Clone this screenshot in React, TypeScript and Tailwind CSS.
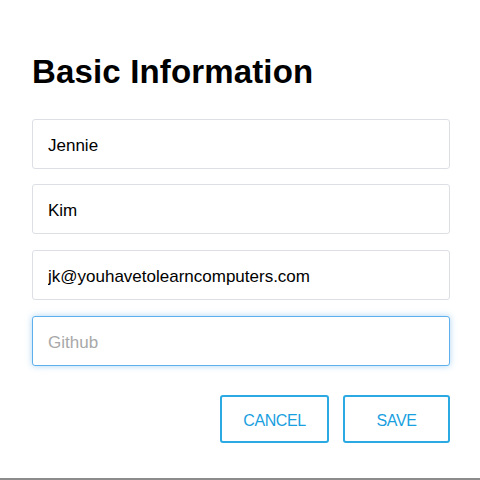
import { useState } from "react";

const font = { fontFamily: '"Liberation Sans", Arial, sans-serif' };

const App = () => {
  const [form, setForm] = useState({
    first: "Jennie",
    last: "Kim",
    email: "jk@youhavetolearncomputers.com",
    github: "",
  });

  const inputCls =
    "block w-full h-[50px] rounded-[3px] border border-[#dcdfe5] bg-white px-[15px] pt-[3px] text-[17px] text-black outline-none";

  return (
    <div
      className="w-[480px] h-[480px] bg-white border-b-2 border-[#8c8c8c] pl-[32px] pr-[30px] pt-[55px]"
      style={font}
    >
      {/* Header */}
      <h1 className="text-[33px] leading-[33px] font-bold text-black tracking-[0.15px]">
        Basic Information
      </h1>

      <div className="mt-[31px]">
        <input
          className={inputCls}
          value={form.first}
          onChange={(e) => setForm({ ...form, first: e.target.value })}
        />
        <input
          className={`${inputCls} mt-[15px]`}
          value={form.last}
          onChange={(e) => setForm({ ...form, last: e.target.value })}
        />
        <input
          className={`${inputCls} mt-[16px]`}
          value={form.email}
          onChange={(e) => setForm({ ...form, email: e.target.value })}
        />
        <input
          className="block w-full h-[50px] rounded-[3px] border border-[#5eb0ec] bg-white px-[15px] pt-[3px] text-[17px] text-black outline-none mt-[16px] shadow-[0_0_6px_rgba(94,176,236,0.5)] placeholder:text-[#a8a8a8]"
          placeholder="Github"
          value={form.github}
          onChange={(e) => setForm({ ...form, github: e.target.value })}
        />
      </div>

      {/* Buttons */}
      <div className="mt-[29px] flex justify-end gap-[14px]">
        <button className="w-[109px] h-[48px] pt-[3px] rounded-[3px] border-2 border-[#2aa9e2] text-[#1a9fe0] text-[16px] tracking-[-0.4px] uppercase bg-white">
          Cancel
        </button>
        <button className="w-[107px] h-[48px] pt-[3px] rounded-[3px] border-2 border-[#2aa9e2] text-[#1a9fe0] text-[16px] tracking-[-0.4px] uppercase bg-white">
          Save
        </button>
      </div>
    </div>
  );
};

export default App;
